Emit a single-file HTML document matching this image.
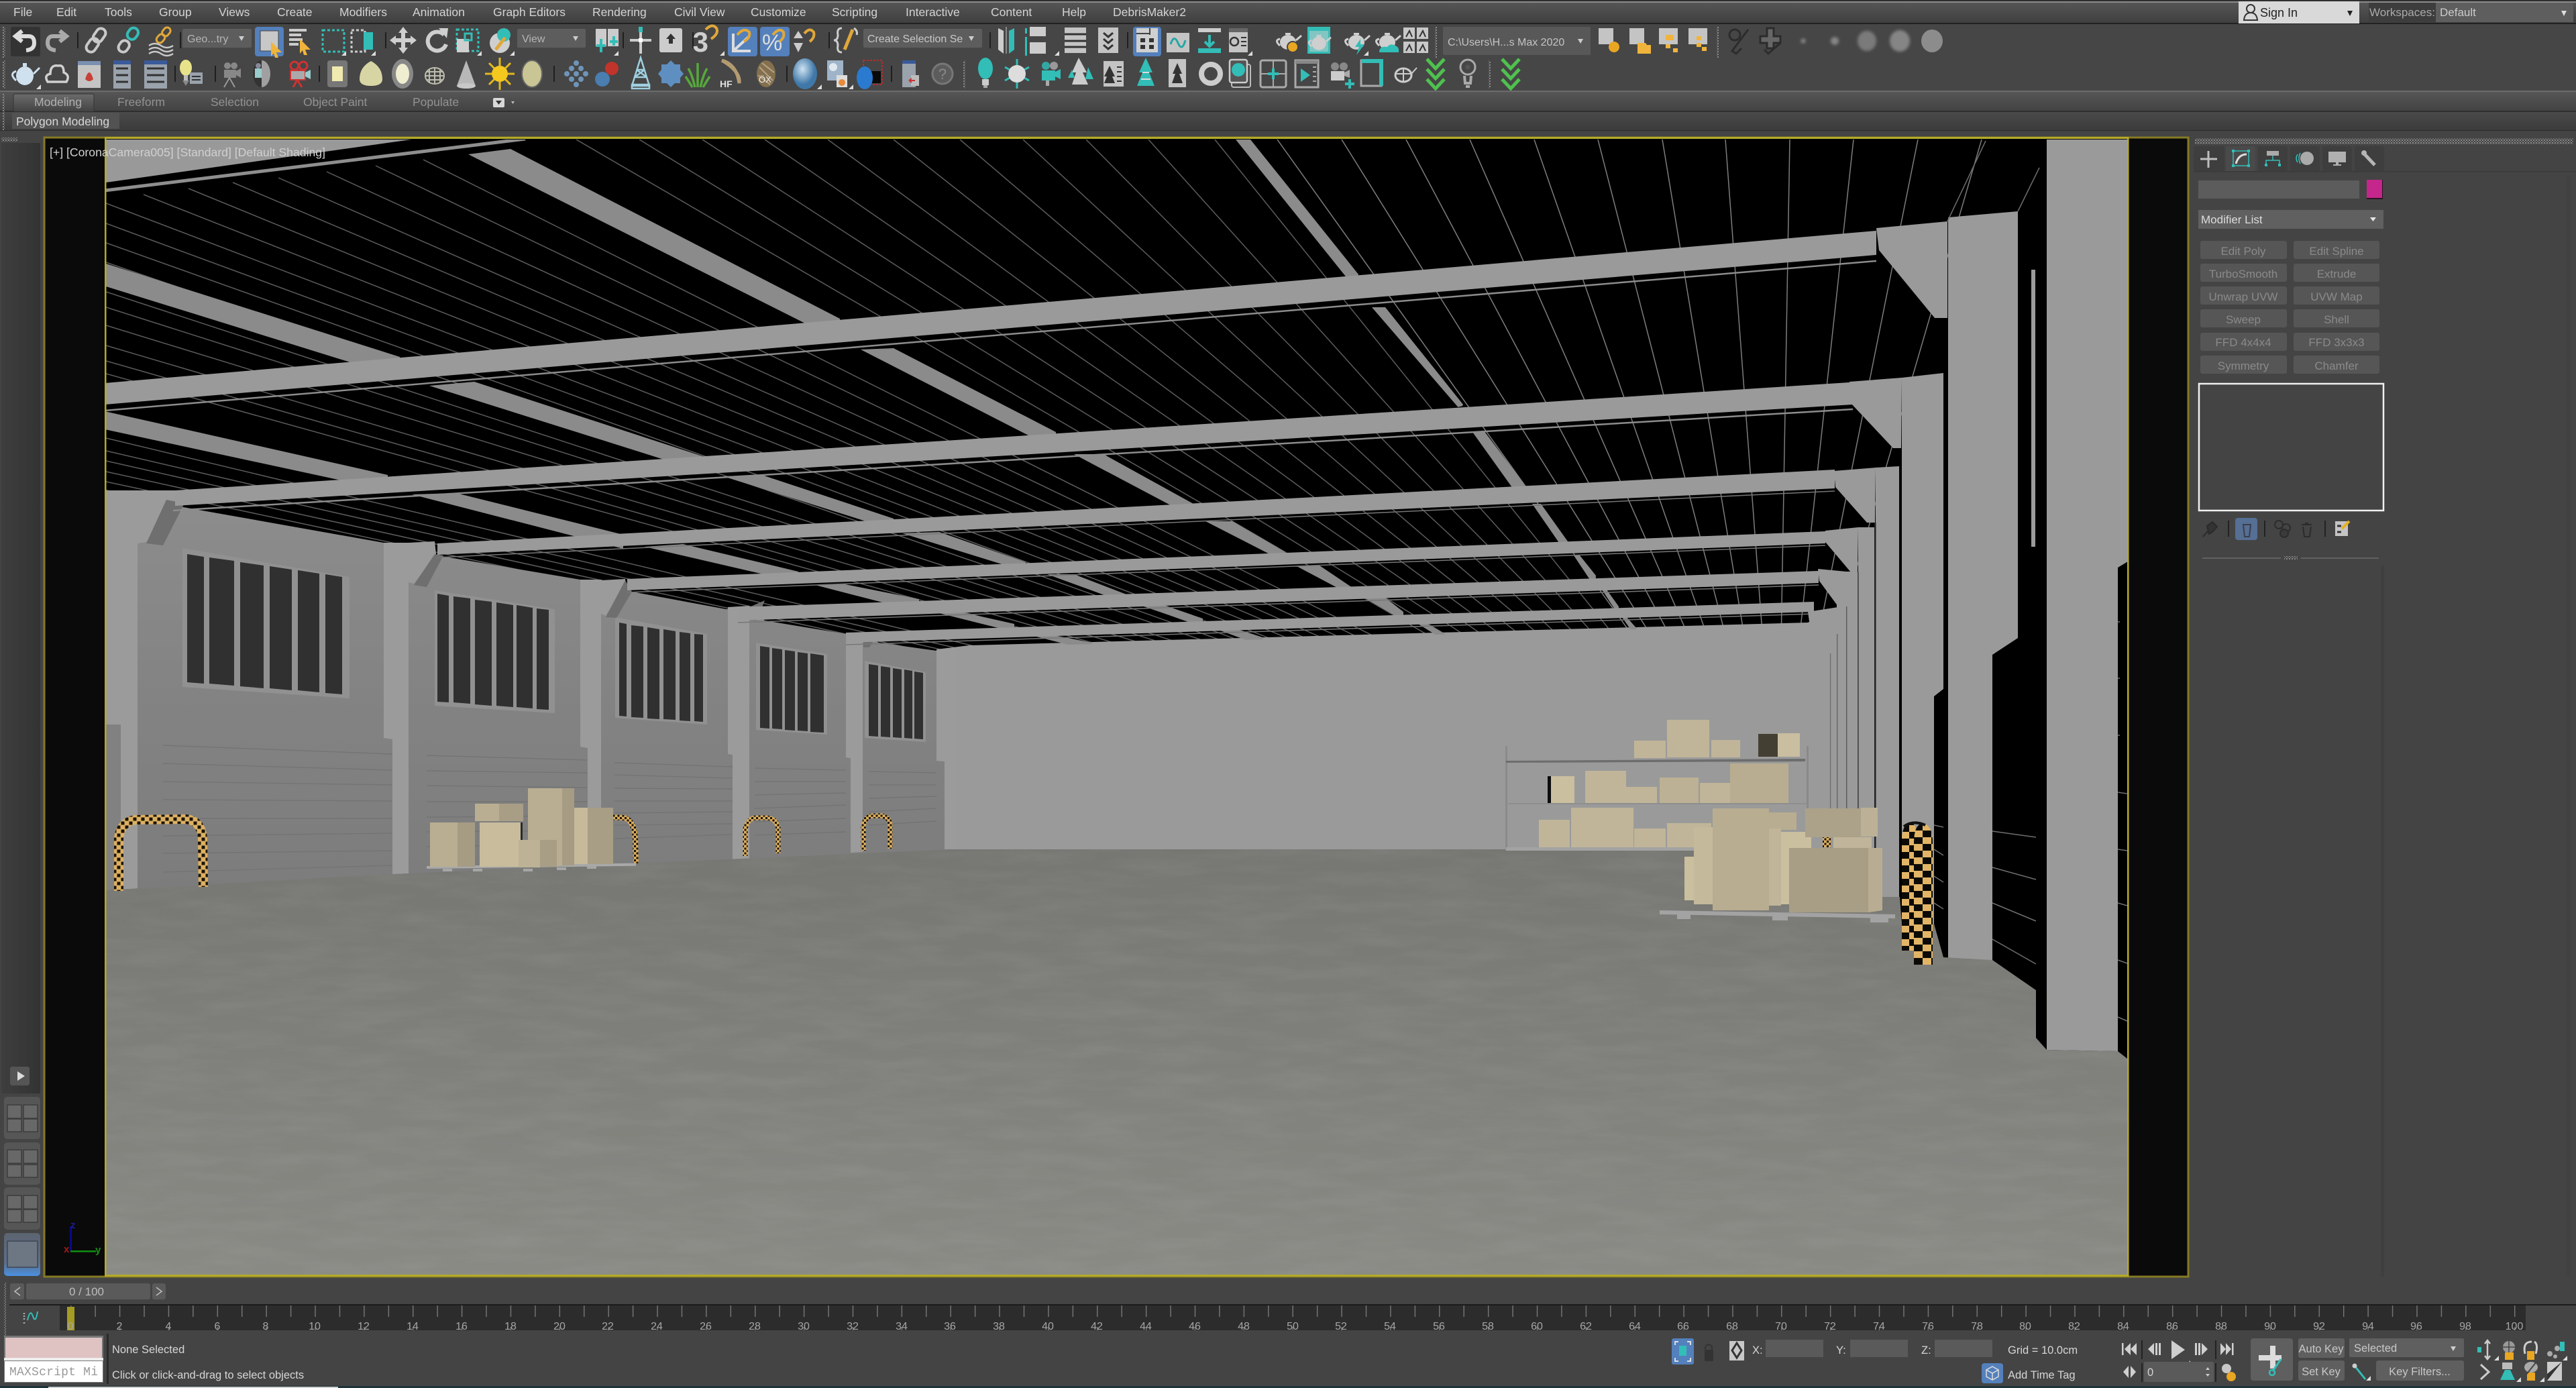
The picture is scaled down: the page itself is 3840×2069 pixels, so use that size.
<!DOCTYPE html>
<html lang="en"><head><meta charset="utf-8"><title>3ds Max 2020</title>
<style>
html,body{margin:0;padding:0;background:#444;width:3840px;height:2069px;overflow:hidden}
svg{display:block}
text{font-family:"Liberation Sans",sans-serif}
.m text,.m{fill:#d4d4d4;font-size:17.5px}
.b{fill:#8a8a8a;font-size:17px;text-anchor:middle}
.t{fill:#a6a6a6;font-size:16px;text-anchor:middle}
.s{fill:#d6d6d6;font-size:16.5px}
.n{fill:none;stroke:#c9c9c9;stroke-width:4}
.q{fill:none;stroke:#33bdb7;stroke-width:4}
.d{fill:none;stroke:#c9c9c9;stroke-width:3;stroke-dasharray:4 3}
.e{fill:none;stroke:#33bdb7;stroke-width:3;stroke-dasharray:4 3}
</style></head><body>
<svg width="3840" height="2069" viewBox="0 0 3840 2069" xmlns="http://www.w3.org/2000/svg">
<defs>
<linearGradient id="gm" x1="0" y1="0" x2="0" y2="1"><stop offset="0" stop-color="#555"/><stop offset="1" stop-color="#3f3f3f"/></linearGradient>
<linearGradient id="gr" x1="0" y1="0" x2="0" y2="1"><stop offset="0" stop-color="#565656"/><stop offset="1" stop-color="#424242"/></linearGradient>
<linearGradient id="gp" x1="0" y1="0" x2="0" y2="1"><stop offset="0" stop-color="#4a4a4a"/><stop offset="1" stop-color="#3b3b3b"/></linearGradient>
<linearGradient id="gt" x1="0" y1="0" x2="0" y2="1"><stop offset="0" stop-color="#6c6c6c"/><stop offset="1" stop-color="#444"/></linearGradient>
<linearGradient id="gf" x1="0" y1="0" x2="0" y2="1"><stop offset="0" stop-color="#767672"/><stop offset=".5" stop-color="#7f7f7b"/><stop offset="1" stop-color="#8a8a85"/></linearGradient>
<linearGradient id="gw" x1="0" y1="0" x2="0" y2="1"><stop offset="0" stop-color="#8d8d8d"/><stop offset=".5" stop-color="#838383"/><stop offset="1" stop-color="#7c7c7c"/></linearGradient>
<linearGradient id="gl" x1="0" y1="0" x2="1" y2="0"><stop offset="0" stop-color="#3e3e3e"/><stop offset="1" stop-color="#333"/></linearGradient>
<linearGradient id="gb" x1="0" y1="0" x2="0" y2="1"><stop offset="0" stop-color="#5c6470"/><stop offset=".7" stop-color="#5d6f8a"/><stop offset="1" stop-color="#4a90e2"/></linearGradient>
<radialGradient id="gs" cx=".4" cy=".35"><stop offset="0" stop-color="#cfe2f2"/><stop offset="1" stop-color="#3f78a8"/></radialGradient>
<pattern id="ck" x="2853" y="1228" width="26" height="20" patternUnits="userSpaceOnUse"><rect width="26" height="20" fill="#e2b566"/><rect width="13" height="10" fill="#0c0a06"/><rect x="13" y="10" width="13" height="10" fill="#0c0a06"/></pattern>
<pattern id="ck3" x="2835" y="1230" width="22" height="20" patternUnits="userSpaceOnUse"><rect width="22" height="20" fill="#e2b566"/><rect width="11" height="10" fill="#0c0a06"/><rect x="11" y="10" width="11" height="10" fill="#0c0a06"/></pattern>
<pattern id="ck2" width="12" height="12" patternUnits="userSpaceOnUse"><rect width="12" height="12" fill="#dcb063"/><rect x=".5" y=".5" width="5" height="5" fill="#1a1408"/><rect x="6.5" y="6.5" width="5" height="5" fill="#1a1408"/></pattern>
<pattern id="ck4" width="7" height="7" patternUnits="userSpaceOnUse"><rect width="7" height="7" fill="#d8ab5e"/><rect width="3" height="3" fill="#1a1408"/><rect x="3.5" y="3.5" width="3" height="3" fill="#1a1408"/></pattern>
<pattern id="tk" x="105" y="0" width="36.43" height="3000" patternUnits="userSpaceOnUse"><rect width="1.4" height="3000" fill="#777"/></pattern>
<pattern id="tk2" x="105" y="0" width="72.86" height="3000" patternUnits="userSpaceOnUse"><rect width="1.4" height="3000" fill="#777"/></pattern>
<pattern id="dt" width="4" height="4" patternUnits="userSpaceOnUse"><rect width="2" height="2" fill="#8a8a8a"/><rect x="2" y="2" width="2" height="2" fill="#6a6a6a"/></pattern>
<filter id="nz" x="0" y="0" width="1" height="1"><feTurbulence type="fractalNoise" baseFrequency=".01 .05" numOctaves="4" seed="7"/><feColorMatrix values="0 0 0 0 .6  0 0 0 0 .6  0 0 0 0 .58  1.6 0 0 0 -.55"/></filter>
<filter id="bl"><feGaussianBlur stdDeviation="2"/></filter>
<clipPath id="cv"><rect x="158" y="208" width="3014" height="1692"/></clipPath>
<clipPath id="cf"><polygon points="158,1327 585,1303 948,1287 1420,1266 2250,1266 2730,1266 2796,1337 2832,1337 2835,1377 2883,1377 2897,1427 2970,1431 3035,1476 3035,1547 3051,1565 3157,1567 3171,1578 3172,1900 158,1900"/></clipPath>
<polygon id="fl" points="0,0 7,0 7,-7" fill="#ddd"/>
<g id="chev"><path d="M-13 -22 L0 -8 L13 -22 M-13 -7 L0 7 L13 -7 M-13 8 L0 22 L13 8" fill="none" stroke="#4fc14f" stroke-width="5"/></g>
<g id="pot"><ellipse cy="3" rx="12" ry="11" fill="#cfcfcf"/><path d="M12 0 L20 -7 M-12 -2 Q-21 0 -12 8" fill="none" stroke="#cfcfcf" stroke-width="3"/><rect x="-4" y="-11" width="8" height="3" fill="#cfcfcf"/></g>
<g id="doc"><rect x="-14" y="-18" width="28" height="36" fill="#c4c4c4"/><rect x="-14" y="-18" width="28" height="6" fill="#666"/></g>
</defs>

<rect width="3840" height="2069" fill="#444"/>
<!-- menu -->
<rect y="0" width="3840" height="2" fill="#2f2f2f"/><rect y="2" width="3840" height="2" fill="#8c8c8c"/>
<rect y="4" width="3840" height="31" fill="url(#gm)"/><rect y="34" width="3840" height="2" fill="#222"/>
<rect y="36" width="3840" height="99" fill="#464646"/>
<g class="m">
<text x="20" y="24">File</text><text x="84" y="24">Edit</text><text x="156" y="24">Tools</text><text x="237" y="24">Group</text><text x="326" y="24">Views</text><text x="413" y="24">Create</text><text x="506" y="24">Modifiers</text><text x="615" y="24">Animation</text><text x="735" y="24">Graph Editors</text><text x="883" y="24">Rendering</text><text x="1005" y="24">Civil View</text><text x="1119" y="24">Customize</text><text x="1240" y="24">Scripting</text><text x="1350" y="24">Interactive</text><text x="1477" y="24">Content</text><text x="1583" y="24">Help</text><text x="1659" y="24">DebrisMaker2</text>
</g>
<rect x="3337" y="2" width="180" height="33" fill="#d9d9d9"/>
<circle cx="3355" cy="13" r="6" fill="none" stroke="#333" stroke-width="2"/><path d="M3345 30 Q3346 19 3355 19 Q3364 19 3365 30 Z" fill="none" stroke="#333" stroke-width="2"/>
<text x="3369" y="25" font-size="18" fill="#222" style="font-size:18px">Sign In</text><polygon points="3499,16 3507,16 3503,24" fill="#222"/>
<rect x="3531" y="4" width="100" height="29" fill="#3d3d3d"/><text x="3532" y="24" style="font-size:17px" fill="#aaa">Workspaces:</text>
<rect x="3631" y="4" width="205" height="29" fill="#5e5e5e"/><text x="3637" y="24" style="font-size:17px" fill="#ccc">Default</text><polygon points="3818,16 3826,16 3822,24" fill="#ddd"/>

<!-- toolbar strips -->
<rect x="4" y="40" width="4" height="46" fill="url(#dt)"/><rect x="4" y="90" width="4" height="42" fill="url(#dt)"/>
<g fill="#1f1f1f"><rect x="115" y="48" width="2" height="24"/><rect x="268" y="48" width="2" height="24"/><rect x="574" y="48" width="2" height="24"/><rect x="928" y="48" width="2" height="24"/><rect x="1032" y="48" width="2" height="24"/><rect x="1235" y="48" width="2" height="24"/><rect x="1475" y="48" width="2" height="24"/><rect x="1680" y="48" width="2" height="24"/><rect x="1835" y="48" width="2" height="24"/>
<rect x="260" y="98" width="2" height="24"/><rect x="320" y="98" width="2" height="24"/><rect x="475" y="98" width="2" height="24"/><rect x="825" y="98" width="2" height="24"/><rect x="1172" y="98" width="2" height="24"/><rect x="1328" y="98" width="2" height="24"/></g>
<rect x="1436" y="90" width="3" height="42" fill="url(#dt)"/><rect x="2139" y="40" width="3" height="46" fill="url(#dt)"/><rect x="2219" y="90" width="3" height="42" fill="url(#dt)"/><rect x="2559" y="40" width="3" height="46" fill="url(#dt)"/>

<!-- Row 1 icons -->
<rect x="16" y="40" width="44" height="44" rx="3" fill="#333"/>
<g transform="translate(37,60)"><path d="M-4 -14 L-14 -6 L-4 2 M-14 -6 H6 Q14 -6 14 4 Q14 14 2 15" fill="none" stroke="#ddd" stroke-width="6"/></g>
<g transform="translate(85,60) scale(-1,1)"><path d="M-4 -14 L-14 -6 L-4 2 M-14 -6 H6 Q14 -6 14 4 Q14 14 2 15" fill="none" stroke="#aaa" stroke-width="6"/></g>
<g transform="translate(143,60) rotate(-55)"><rect class="n" x="-20" y="-7" width="22" height="14" rx="7"/><rect class="n" x="-2" y="-7" width="22" height="14" rx="7"/></g>
<g transform="translate(191,60) rotate(-55)"><rect class="n" x="-20" y="-7" width="18" height="14" rx="7"/><rect class="q" x="3" y="-7" width="18" height="14" rx="7"/></g>
<g transform="translate(240,60)"><g transform="translate(4,-8) rotate(-50)"><rect x="-14" y="-5" width="14" height="10" rx="5" fill="none" stroke="#e0a83a" stroke-width="3"/><rect x="-1" y="-5" width="14" height="10" rx="5" fill="none" stroke="#e0a83a" stroke-width="3"/></g><path d="M-18 8 Q-9 2 0 8 T18 8 M-18 14 Q-9 8 0 14 T18 14 M-18 20 Q-9 14 0 20 T18 20" fill="none" stroke="#c9c9c9" stroke-width="2.5"/></g>
<rect x="272" y="43" width="103" height="28" rx="2" fill="#5d5d5d"/><text x="279" y="63" style="font-size:16px" fill="#b5b5b5">Geo...try</text><polygon points="356,54 364,54 360,61" fill="#ccc"/>
<rect x="380" y="40" width="43" height="44" rx="4" fill="#5480bc"/>
<rect x="388" y="46" width="27" height="30" fill="#c8c8c8" stroke="#444"/><polygon points="404,62 420,78 412,78 415,86 410,86 408,79 404,84" fill="#f0b43c"/>
<g transform="translate(447,60)"><path d="M-16 -15 H10 M-16 -8 H2 M-16 -1 H4 M-16 6 H-2" stroke="#ccc" stroke-width="4" fill="none"/><polygon points="0,-2 16,14 8,14 11,22 6,22 4,15 0,20" fill="#f0b43c"/></g>
<rect class="e" x="481" y="45" width="32" height="32" />
<g transform="translate(540,60)"><rect class="d" x="-16" y="-15" width="20" height="32"/><rect x="2" y="-12" width="14" height="26" fill="#33bdb7"/></g>
<g transform="translate(601,60)"><path d="M0 -20 L7 -11 H3 V-3 H11 V-7 L20 0 L11 7 V3 H3 V11 H7 L0 20 L-7 11 H-3 V3 H-11 V7 L-20 0 L-11 -7 V-3 H-3 V-11 H-7 Z" fill="#cfcfcf"/></g>
<g transform="translate(652,60)"><path d="M10 -8 A14 14 0 1 0 13 6" fill="none" stroke="#cfcfcf" stroke-width="6"/><polygon points="2,-18 16,-18 14,-3" fill="#cfcfcf"/></g>
<g transform="translate(697,60)"><rect class="e" x="-16" y="-16" width="32" height="32"/><rect x="-16" y="-2" width="18" height="20" fill="#cfcfcf"/><rect x="-4" y="-10" width="10" height="10" fill="none" stroke="#33bdb7" stroke-width="3"/></g>
<g transform="translate(745,60)"><circle cy="4" r="15" fill="#cfcfcf"/><circle cx="6" cy="-8" r="10" fill="#33bdb7"/><path d="M-6 14 L8 -4" stroke="#e0a83a" stroke-width="5"/></g>
<rect x="771" y="43" width="102" height="28" rx="2" fill="#5d5d5d"/><text x="778" y="63" style="font-size:16px" fill="#b5b5b5">View</text><polygon points="854,54 862,54 858,61" fill="#ccc"/>
<g transform="translate(905,60)"><rect x="-17" y="-17" width="34" height="26" fill="#ccc"/><rect x="-1" y="-17" width="2" height="26" fill="#444"/><path d="M-9 -2 V18 M-16 8 H-2 M10 -6 V8 M4 2 H16" stroke="#33bdb7" stroke-width="4"/></g>
<g transform="translate(955,60)"><path d="M0 -20 V20 M-16 0 H16" stroke="#ccc" stroke-width="4"/><rect x="-3" y="-20" width="6" height="8" fill="#33bdb7"/><rect x="-3" y="-3" width="6" height="6" fill="#fff"/></g>
<g transform="translate(1000,60)"><rect x="-17" y="-18" width="34" height="36" rx="3" fill="#ccc"/><path d="M0 -10 L7 -2 H3 V5 H-3 V-2 H-7 Z" fill="#333"/></g>
<text x="1044" y="77" style="font-size:42px;font-weight:bold" text-anchor="end" fill="#cfcfcf" dx="12">3</text><path d="M1060 48 Q1070 38 1076 46 Q1080 54 1068 62" fill="none" stroke="#e0a83a" stroke-width="4" transform="translate(-8,-4)"/>
<rect x="1085" y="40" width="44" height="44" rx="4" fill="#5480bc"/><rect x="1133" y="40" width="44" height="44" rx="4" fill="#5480bc"/>
<g transform="translate(1105,60)"><path d="M-12 -10 V16 H14 M-12 16 L12 -6" fill="none" stroke="#ddd" stroke-width="4"/><path d="M-6 -8 Q4 -20 12 -12 Q14 -4 4 2" fill="none" stroke="#e0a83a" stroke-width="4"/></g>
<g transform="translate(1154,60)"><text x="-18" y="15" style="font-size:34px" fill="#ddd">%</text><path d="M-2 -8 Q8 -20 14 -12 Q16 -4 8 2" fill="none" stroke="#e0a83a" stroke-width="4"/></g>
<g transform="translate(1197,60)"><polygon points="-14,-3 0,-3 -7,-14" fill="#ccc"/><polygon points="-14,4 0,4 -7,18" fill="#ccc"/><path d="M2 -10 Q10 -20 16 -12 Q18 -4 10 2" fill="none" stroke="#e0a83a" stroke-width="4"/></g>
<g transform="translate(1263,60)"><path d="M-8 -18 Q-16 -18 -14 -8 Q-14 0 -20 0 Q-14 0 -14 8 Q-16 18 -8 18 M10 -18 Q16 -14 14 -8" fill="none" stroke="#ccc" stroke-width="3"/><path d="M8 -16 L-4 14" stroke="#e0a83a" stroke-width="5"/></g>
<rect x="1287" y="43" width="177" height="28" rx="2" fill="#5d5d5d"/><text x="1293" y="63" style="font-size:16px" fill="#c8c8c8">Create Selection Se</text><polygon points="1444,54 1452,54 1448,61" fill="#ccc"/>
<g transform="translate(1500,60)"><rect x="-1" y="-20" width="2" height="40" fill="#888"/><polygon points="-4,-14 -12,-18 -12,14 -4,20" fill="#ccc"/><polygon points="4,-14 12,-18 12,14 4,20" fill="#33bdb7"/></g>
<g transform="translate(1545,60)"><rect x="-17" y="-5" width="3" height="28" fill="#33bdb7"/><rect x="-17" y="-18" width="3" height="8" fill="#33bdb7"/><rect x="-10" y="-20" width="24" height="14" fill="#ccc"/><rect x="-10" y="3" width="24" height="17" fill="#ccc"/></g>
<g transform="translate(1603,60)"><rect x="-16" y="-19" width="32" height="38" fill="#c4c4c4"/><path d="M-16 -9 H16 M-16 1 H16 M-16 10 H16" stroke="#333" stroke-width="3"/></g>
<g transform="translate(1652,60)"><rect x="-15" y="-19" width="30" height="38" fill="#c4c4c4"/><path d="M-7 -11 L0 -5 L7 -11 M-7 -2 L0 4 L7 -2 M-7 7 L0 13 L7 7" fill="none" stroke="#333" stroke-width="3"/></g>
<rect x="1689" y="40" width="42" height="44" rx="4" fill="#5480bc"/>
<g transform="translate(1710,60)"><rect x="-16" y="-18" width="32" height="36" fill="#d0d0d0"/><path d="M-16 -10 H4 M4 -18 V-8" stroke="#444" stroke-width="2" fill="none"/><rect x="-10" y="-3" width="7" height="6" fill="#333"/><rect x="3" y="-3" width="7" height="6" fill="#333"/><rect x="-10" y="7" width="7" height="6" fill="#333"/><rect x="3" y="7" width="7" height="6" fill="#333"/></g>
<g transform="translate(1756,60)"><rect x="-17" y="-18" width="34" height="36" fill="#c4c4c4"/><rect x="-17" y="-18" width="34" height="7" fill="#444"/><path d="M-11 6 Q-6 -10 0 4 T11 0" fill="none" stroke="#22a8a3" stroke-width="3"/></g>
<g transform="translate(1803,60)"><rect x="-17" y="-18" width="34" height="6" fill="#ccc"/><rect x="-17" y="12" width="34" height="7" fill="#33bdb7"/><path d="M0 -8 V8 M-7 2 L0 9 L7 2" fill="none" stroke="#33bdb7" stroke-width="4"/></g>
<g transform="translate(1846,60)"><use href="#doc"/><circle cx="-6" cy="2" r="6" fill="none" stroke="#333" stroke-width="2.5"/><path d="M4 -4 H12 M4 2 H12 M4 8 H12" stroke="#333" stroke-width="2"/></g>
<g transform="translate(1920,60)"><use href="#pot"/><circle cx="7" cy="10" r="8" fill="#e8a623" stroke="#444" stroke-width="2"/></g>
<g transform="translate(1966,60)"><rect x="-17" y="-20" width="34" height="40" fill="#33bdb7"/><rect x="-14" y="-14" width="28" height="31" fill="#d0d0d0" opacity=".5"/><use href="#pot" transform="translate(0,2) scale(.9)"/></g>
<g transform="translate(2022,60)"><use href="#pot"/><path d="M6 -2 L-2 10 H4 L0 22 L12 6 H6 Z" fill="#33bdb7"/></g>
<g transform="translate(2068,60)"><use href="#pot"/><path d="M-12 18 Q-12 8 0 10 Q4 4 12 8 Q18 10 17 18 Z" fill="#33bdb7"/></g>
<g transform="translate(2110,60)" fill="#c8c8c8"><rect x="-18" y="-19" width="17" height="17"/><rect x="2" y="-19" width="17" height="17"/><rect x="-18" y="2" width="17" height="17"/><rect x="2" y="2" width="17" height="17"/><path d="M-14 -5 L-9 -14 L-5 -5 M6 -5 L11 -14 L15 -5 M-14 16 L-9 7 L-5 16 M6 16 L11 7 L15 16" stroke="#333" stroke-width="2" fill="none"/></g>
<rect x="2151" y="40" width="220" height="42" rx="2" fill="#585858"/><text x="2158" y="68" style="font-size:16px" fill="#c4c4c4">C:\Users\H...s Max 2020</text><polygon points="2352,58 2360,58 2356,65" fill="#ccc"/>
<g transform="translate(2399,60)"><path d="M-16 -18 H6 V6 H-16 Z" fill="#c4c4c4"/><circle cx="7" cy="10" r="8" fill="#e8a623"/></g>
<g transform="translate(2445,60)"><path d="M-16 -18 H6 V6 H-16 Z" fill="#c4c4c4"/><path d="M-4 4 H8 L10 7 H16 V20 H-4 Z" fill="#f0b43c"/></g>
<g transform="translate(2487,60)"><path d="M-14 -18 H14 V6 H-14 Z" fill="#c4c4c4"/><rect x="-4" y="-8" width="12" height="8" fill="#f0b43c"/><rect x="-4" y="6" width="7" height="6" fill="#f0b43c"/><rect x="7" y="12" width="7" height="6" fill="#f0b43c"/></g>
<g transform="translate(2531,60)"><path d="M-14 -18 H14 V6 H-14 Z" fill="#c4c4c4"/><rect x="-2" y="-6" width="7" height="6" fill="#f0b43c"/><rect x="-2" y="4" width="7" height="6" fill="#f0b43c"/><rect x="6" y="10" width="7" height="6" fill="#f0b43c"/></g>
<g transform="translate(2590,60)" fill="none" stroke="#2c2c2c" stroke-width="3"><circle cx="-4" cy="-8" r="8"/><path d="M16 -16 L-8 16 L-2 20 L6 12"/></g>
<g transform="translate(2640,60)" fill="none" stroke="#2c2c2c" stroke-width="3"><path d="M-6 -18 H4 V-6 H14 V4 H4 V12 H-6 V4 H-16 V-6 H-6 Z" fill="#666"/><path d="M14 4 L-4 20 L-10 14"/></g>
<g filter="url(#bl)"><circle cx="2688" cy="61" r="3.5" fill="#8a8a8a"/><circle cx="2735" cy="61" r="6" fill="#858585"/><ellipse cx="2783" cy="61" rx="14" ry="15" fill="#7a7a7a"/><ellipse cx="2832" cy="61" rx="15" ry="16" fill="#858585"/></g><ellipse cx="2880" cy="61" rx="16" ry="17" fill="#8c8c8c"/>
<g transform="translate(0,0)"><use href="#fl" x="509" y="83"/><use href="#fl" x="553" y="83"/><use href="#fl" x="711" y="83"/><use href="#fl" x="760" y="83"/><use href="#fl" x="915" y="83"/><use href="#fl" x="1073" y="83"/><use href="#fl" x="1572" y="83"/><use href="#fl" x="1860" y="83"/><use href="#fl" x="2033" y="83"/></g>

<!-- Row 2 icons -->
<g transform="translate(37,110)"><ellipse cy="3" rx="13" ry="14" fill="#cfe0ee"/><path d="M13 0 L22 -9 M-13 -4 Q-24 0 -13 10" fill="none" stroke="#cfe0ee" stroke-width="3"/><rect x="-3" y="-16" width="6" height="5" fill="#cfe0ee"/></g>
<g transform="translate(85,110)"><path d="M-14 12 Q-20 2 -10 0 Q-10 -14 2 -12 Q10 -14 10 -2 Q20 2 14 12 Z" fill="none" stroke="#d0d0d0" stroke-width="3.5"/></g>
<g transform="translate(133,110)"><rect x="-17" y="-19" width="34" height="40" fill="#c4c4c4"/><rect x="-17" y="-19" width="34" height="6" fill="#7b8fb0"/><path d="M-6 8 Q0 -12 6 8 Q0 14 -6 8" fill="#c8403a"/></g>
<g transform="translate(182,110)"><rect x="-13" y="-20" width="26" height="42" fill="#9aa2ac"/><rect x="-13" y="-20" width="26" height="6" fill="#3a5a9a"/><path d="M-9 -8 H9 M-9 2 H9 M-9 12 H9" stroke="#333" stroke-width="3"/></g>
<g transform="translate(232,110)"><rect x="-17" y="-20" width="34" height="42" fill="#9aa2ac"/><rect x="-17" y="-20" width="34" height="6" fill="#3a5a9a"/><path d="M-13 -8 H13 M-13 2 H13 M-13 12 H13" stroke="#333" stroke-width="3"/></g>
<g transform="translate(283,110)"><ellipse cx="-6" cy="-9" rx="9" ry="12" fill="#e8e28a"/><rect x="-9" y="2" width="6" height="8" fill="#bbb"/><rect x="0" y="-2" width="19" height="17" fill="#9aa2ac"/><path d="M3 4 H16 M3 9 H16" stroke="#333" stroke-width="2"/><polygon points="-11,10 -1,10 -6,18" fill="#888"/></g>
<g transform="translate(344,110)" fill="#2e2e2e"><circle cx="-5" cy="-12" r="5" fill="#888"/><circle cx="5" cy="-12" r="5" fill="#888"/><rect x="-10" y="-6" width="18" height="12" fill="#888"/><polygon points="8,-4 15,-8 15,6 8,2" fill="#888"/><path d="M-2 6 L-10 20 M-2 6 L6 20" stroke="#999" stroke-width="2"/></g>
<g transform="translate(390,110)"><path d="M0 -20 A13 20 0 0 1 0 20 Z" fill="#a0a0a0"/><path d="M0 -20 A13 20 0 0 0 0 20 Z" fill="#333"/><rect x="-10" y="-8" width="10" height="14" fill="#9cc"/><circle cx="-5" cy="-12" r="4" fill="#889"/></g>
<g transform="translate(445,110)"><circle cx="-6" cy="-12" r="6" fill="none" stroke="#c33" stroke-width="3"/><circle cx="7" cy="-12" r="6" fill="none" stroke="#c33" stroke-width="3"/><rect x="-12" y="-5" width="22" height="14" fill="#aaa" stroke="#c33" stroke-width="2"/><polygon points="10,-2 18,-6 18,8 10,4" fill="#9cc"/><path d="M-2 9 L-8 20 M-2 9 L5 20" stroke="#c33" stroke-width="3"/></g>
<g transform="translate(503,110)"><rect x="-15" y="-20" width="30" height="40" rx="4" fill="#777"/><rect x="-8" y="-11" width="16" height="22" fill="#f0eab0"/></g>
<g transform="translate(553,110)"><path d="M0 -19 Q17 -10 17 8 Q17 18 0 18 Q-17 18 -17 8 Q-17 -10 0 -19" fill="#d8d5a5"/></g>
<g transform="translate(600,110)"><ellipse rx="16" ry="22" fill="#888"/><ellipse rx="10" ry="15" fill="#f0eed0"/></g>
<g transform="translate(648,110)" fill="none" stroke="#bdbdae" stroke-width="2"><ellipse cy="3" rx="14" ry="12"/><path d="M-14 3 H14 M-8 -7 V14 M0 -9 V15 M8 -7 V14 M-12 -3 H12 M-12 9 H12"/></g>
<polygon points="695,90 709,128 681,128" fill="#b8b8b8"/><ellipse cx="695" cy="128" rx="14" ry="4" fill="#c8c8c8"/>
<g transform="translate(745,110)"><path d="M0 -24 V24 M-22 0 H22 M-16 -16 L16 16 M-16 16 L16 -16" stroke="#e2b81e" stroke-width="3"/><circle r="12" fill="#f4c81e"/></g>
<ellipse cx="793" cy="110" rx="15" ry="20" fill="#c9c594" stroke="#666" stroke-width="2"/>
<g transform="translate(860,110)" fill="#6f94b8"><circle cx="-15" cy="0" r="4"/><circle cx="-8" cy="-8" r="4"/><circle cx="-1" cy="-16" r="4"/><circle cx="-8" cy="8" r="4"/><circle cx="-1" cy="0" r="4"/><circle cx="6" cy="-8" r="4"/><circle cx="-1" cy="16" r="4"/><circle cx="6" cy="8" r="4"/><circle cx="13" cy="0" r="4"/></g>
<g transform="translate(905,110)"><circle cx="7" cy="-8" r="10" fill="#c0342c"/><circle cx="-7" cy="8" r="11" fill="#4a7db0"/></g>
<g transform="translate(955,110)" fill="none" stroke="#9fd0e0" stroke-width="2.5"><path d="M0 -24 L13 18 H-13 Z M-9 5 H9 M-6 -6 H6 M-9 5 L6 -6 M9 5 L-6 -6"/><rect x="-13" y="16" width="26" height="6"/></g>
<g transform="translate(1000,110)"><path d="M0 -20 L6 -14 L14 -14 L14 -6 L19 0 L14 6 L14 14 L6 14 L0 20 L-6 14 L-14 14 L-14 6 L-19 0 L-14 -6 L-14 -14 L-6 -14 Z" fill="#5e8fc0"/></g>
<g transform="translate(1040,110)" fill="none" stroke="#55a93a" stroke-width="3.5"><path d="M0 20 V-16 M-4 20 Q-8 2 -14 -8 M4 20 Q8 2 14 -8 M-8 20 Q-14 10 -18 4 M8 20 Q14 10 18 4"/></g>
<g transform="translate(1090,110)"><path d="M-14 -20 Q8 -14 12 14 Q14 -4 -14 -20" fill="#b49a70" stroke="#b49a70" stroke-width="5"/><text x="-17" y="20" style="font-size:14px;font-weight:bold" fill="#e0e0e0">HF</text></g>
<g transform="translate(1142,110)"><ellipse rx="14" ry="20" fill="#84704f"/><path d="M-10 -10 L10 10 M-12 2 L6 16 M-6 -16 L12 -2" stroke="#b5a484" stroke-width="2"/><text x="-11" y="13" style="font-size:13px" fill="#eee">ÖX</text></g>
<ellipse cx="1200" cy="110" rx="18" ry="23" fill="url(#gs)"/>
<g transform="translate(1245,110)"><rect x="-12" y="-20" width="24" height="30" fill="#9fb4c8"/><circle cx="-3" cy="-10" r="6" fill="#e0e8f0"/><rect x="2" y="2" width="16" height="18" fill="#ddd"/><circle cx="10" cy="13" r="5" fill="#e88a3a"/></g>
<g transform="translate(1295,110)"><rect x="-8" y="-20" width="28" height="36" fill="none" stroke="#b03030" stroke-width="2" stroke-dasharray="3 2"/><rect x="-2" y="-4" width="20" height="18" fill="#0a0a0a"/><ellipse cx="-6" cy="6" rx="12" ry="17" fill="#2a7ad0"/></g>
<g transform="translate(1356,110)"><rect x="-11" y="-20" width="20" height="40" fill="#9aa2ac"/><rect x="-11" y="-20" width="20" height="5" fill="#3a5a9a"/><rect x="2" y="2" width="12" height="16" fill="#bbb"/><path d="M-1 10 H8 M-1 10 L3 7 M-1 10 L3 13" stroke="#c33" stroke-width="2" fill="none"/></g>
<circle cx="1405" cy="110" r="15" fill="#5c5c5c" stroke="#777" stroke-width="3"/><text x="1405" y="118" text-anchor="middle" style="font-size:22px" fill="#8a8a8a">?</text>
<g transform="translate(1469,110)"><ellipse cy="-8" rx="11" ry="16" fill="#33bdb7"/><rect x="-5" y="8" width="10" height="9" fill="#ccc"/><rect x="-3" y="17" width="6" height="4" fill="#aaa"/></g>
<g transform="translate(1516,110)"><path d="M0 -22 V22 M-18 -10 L18 10 M-18 10 L18 -10" stroke="#33bdb7" stroke-width="3"/><circle r="13" fill="#ddd"/></g>
<g transform="translate(1565,110)"><circle cx="-6" cy="-12" r="6" fill="#33a8a3"/><circle cx="6" cy="-12" r="6" fill="#999"/><rect x="-12" y="-5" width="20" height="15" fill="#33bdb7"/><polygon points="8,-3 16,-7 16,8 8,4" fill="#33bdb7"/><rect x="-6" y="10" width="5" height="8" fill="#aaa"/></g>
<g transform="translate(1612,110)"><polygon points="-4,-24 8,-2 2,-2 10,16 -14,16 -8,-2 -14,-2" fill="#ccc"/><polygon points="-14,-6 -20,6 -10,6" fill="#33bdb7"/><polygon points="10,-10 18,8 6,8" fill="#33bdb7"/></g>
<g transform="translate(1660,110)"><rect x="-15" y="-19" width="30" height="38" fill="#c4c4c4"/><polygon points="-6,-12 2,4 -2,4 2,14 -14,14 -10,4 -14,4" fill="#333"/><path d="M5 -10 H12 M5 -3 H12 M5 4 H12 M5 11 H12" stroke="#333" stroke-width="2"/></g>
<g transform="translate(1708,110)"><polygon points="0,-24 10,-2 5,-2 13,18 -13,18 -5,-2 -10,-2" fill="#33bdb7"/><path d="M-7 8 H7 M-5 -2 H5" stroke="#ddd" stroke-width="2"/></g>
<g transform="translate(1755,110)"><rect x="-13" y="-22" width="26" height="42" fill="#c4c4c4"/><polygon points="0,-16 7,0 3,0 8,14 -8,14 -3,0 -7,0" fill="#333"/></g>
<g transform="translate(1805,110)"><circle r="14" fill="none" stroke="#ccc" stroke-width="8"/><circle r="4" fill="#444"/></g>
<g transform="translate(1848,110)"><rect x="-12" y="-14" width="28" height="34" rx="3" fill="none" stroke="#bbb" stroke-width="2"/><rect x="-15" y="-21" width="26" height="34" rx="3" fill="#555" stroke="#ccc" stroke-width="2.5"/><circle cx="-2" cy="-6" r="10" fill="#33bdb7"/></g>
<g transform="translate(1898,110)"><rect x="-19" y="-20" width="38" height="40" rx="3" fill="none" stroke="#aaa" stroke-width="3"/><path d="M0 -20 V20 M-19 0 H19" stroke="#aaa" stroke-width="2"/><path d="M-8 0 H8 M0 -8 V8" stroke="#33bdb7" stroke-width="4"/></g>
<g transform="translate(1948,110)"><rect x="-17" y="-20" width="34" height="40" fill="none" stroke="#aaa" stroke-width="3"/><rect x="-17" y="-20" width="34" height="5" fill="#888"/><polygon points="-9,-8 5,2 -9,12" fill="#33bdb7"/><path d="M9 -10 H14 M9 -3 H14 M9 4 H14 M9 11 H14" stroke="#aaa" stroke-width="2"/></g>
<g transform="translate(1998,110)"><circle cx="-8" cy="-11" r="6" fill="#888"/><circle cx="5" cy="-11" r="6" fill="#888"/><rect x="-14" y="-4" width="20" height="14" fill="#ccc"/><polygon points="6,-2 14,-6 14,6 6,3" fill="#aaa"/><path d="M7 15 H21 M14 8 V22" stroke="#33bdb7" stroke-width="4"/></g>
<g transform="translate(2045,110)"><rect x="-16" y="-20" width="30" height="38" fill="none" stroke="#aaa" stroke-width="3"/><rect x="-16" y="-22" width="33" height="6" fill="#33bdb7"/><rect x="11" y="-20" width="6" height="38" fill="#33bdb7"/></g>
<g transform="translate(2092,110)"><ellipse cy="2" rx="12" ry="10" fill="none" stroke="#ccc" stroke-width="3"/><path d="M-12 0 H12 M0 -8 V12 M12 0 L20 -9" stroke="#ccc" stroke-width="2"/></g>
<use href="#chev" x="2140" y="110"/>
<g transform="translate(2188,110)"><circle cy="-10" r="11" fill="none" stroke="#aaa" stroke-width="3"/><circle cy="-10" r="3.5" fill="#555"/><path d="M-5 3 L-4 14 H4 L5 3 M-3 19 H3" stroke="#aaa" stroke-width="4" fill="none"/></g>
<use href="#chev" x="2252" y="110"/>
<use href="#fl" x="54" y="133"/><use href="#fl" x="1218" y="133"/><use href="#fl" x="1265" y="133"/>

<!-- ribbon -->
<rect y="135" width="3840" height="2" fill="#6c6c6c"/>
<rect y="137" width="3840" height="29" fill="url(#gr)"/><rect y="165" width="3840" height="2" fill="#2e2e2e"/>
<rect y="167" width="3840" height="28" fill="url(#gp)"/><rect y="194" width="3840" height="1" fill="#2c2c2c"/>
<path d="M20 166 V142 Q20 140 23 140 H138 Q140 140 140 143 V166" fill="url(#gt)" stroke="#333"/>
<text x="51" y="158" style="font-size:17.5px" fill="#b0b0b0">Modeling</text><text x="175" y="158" style="font-size:17.5px" fill="#929292">Freeform</text><text x="314" y="158" style="font-size:17.5px" fill="#929292">Selection</text><text x="452" y="158" style="font-size:17.5px" fill="#929292">Object Paint</text><text x="615" y="158" style="font-size:17.5px" fill="#929292">Populate</text>
<rect x="735" y="146" width="17" height="14" rx="2" fill="#d8d8d8"/><polygon points="739,150 748,150 743.5,156" fill="#333"/><polygon points="762,151 767,151 764.5,155" fill="#bbb"/>
<rect x="18" y="168" width="160" height="24" fill="#525252"/><text x="24" y="187" style="font-size:17.5px" fill="#d8d8d8">Polygon Modeling</text>
<rect x="4" y="140" width="3" height="54" fill="url(#dt)"/>

<!-- left sidebar -->
<rect x="2" y="205" width="24" height="6" fill="url(#dt)"/>
<rect x="2" y="213" width="58" height="1417" fill="url(#gl)"/>
<rect x="15" y="1590" width="29" height="28" rx="3" fill="#555"/><polygon points="26,1597 37,1604 26,1611" fill="#ddd"/>
<g>
<rect x="6" y="1635" width="54" height="63" rx="5" fill="#565656"/><rect x="6" y="1703" width="54" height="63" rx="5" fill="#565656"/><rect x="6" y="1770" width="54" height="63" rx="5" fill="#565656"/><rect x="6" y="1838" width="54" height="64" rx="5" fill="url(#gb)"/>
<g fill="#686868" stroke="#3c3c3c" stroke-width="1.5"><rect x="11" y="1647" width="21" height="20"/><rect x="35" y="1647" width="21" height="20"/><rect x="11" y="1668" width="21" height="19"/><rect x="35" y="1668" width="21" height="19"/>
<rect x="11" y="1714" width="21" height="20"/><rect x="35" y="1714" width="21" height="20"/><rect x="11" y="1736" width="21" height="19"/><rect x="35" y="1736" width="21" height="19"/>
<rect x="11" y="1782" width="21" height="20"/><rect x="35" y="1782" width="21" height="20"/><rect x="11" y="1803" width="21" height="19"/><rect x="35" y="1803" width="21" height="19"/>
<rect x="11" y="1850" width="45" height="39" fill="#6d7683" stroke="#3c4654"/></g>
</g>

<!-- viewport -->
<rect x="66" y="205" width="3196" height="1698" fill="#0a0a0a" stroke="#857a24" stroke-width="3"/>
<g clip-path="url(#cv)">
<rect x="158" y="208" width="3014" height="1692" fill="#000"/>
<!-- fan lines -->
<path stroke="#5c5c5c" stroke-width="1.5" fill="none" d="M859 208L2650 1250M953 208L2650 1250M1047 208L2650 1250M1140 208L2650 1250M1234 208L2650 1250M1332 208L2650 1250M1431 208L2650 1250M1525 208L2650 1250M1619 208L2650 1250M1712 208L2650 1250M1811 208L2650 1250M560 247L2650 1250M631 238L2650 1250M487 256L2650 1250M415 265L2650 1250M347 272L2650 1250M281 281L2650 1250M214 290L2650 1250M158 303L2650 1250M158 333L2650 1250M158 362L2650 1250M158 391L2650 1250M158 435L2650 1250M158 458L2650 1250M158 485L2650 1250M158 515L2650 1250M158 538L2650 1250M158 557L2650 1250M158 653L2650 1250M158 672L2650 1250M158 687L2650 1250M158 703L2650 1250M158 718L2650 1250"/>
<path stroke="#7d7d7d" stroke-width="1.5" fill="none" d="M1904 208L2650 1250M2000 208L2650 1250M2096 208L2650 1250M2191 208L2650 1250M2287 208L2650 1250M2382 208L2650 1250M2478 208L2650 1250M2572 208L2650 1250M2668 208L2650 1250M2763 208L2650 1250M2859 208L2650 1250M2954 208L2650 1250"/>
<!-- top left grey -->
<polygon points="158,208 613,208 158,272" fill="#999"/>
<path d="M156,284 L783,207" stroke="#8e8e8e" stroke-width="5" fill="none"/>
<!-- back wall -->
<polygon points="1396,968 1445,962 2695,928 2740,905 2740,1290 1396,1290" fill="#9a9a9a"/>
<!-- left wall -->
<polygon points="158,730 262,754 572,809 609,809 652,828 865,864 896,864 942,882 1082,908 1117,905 1140,925 1261,945 1286,945 1310,958 1396,970 1425,975 1425,1300 158,1340" fill="url(#gw)"/>
<!-- window frames & panes -->
<g fill="#919191"><polygon points="272,817 521,860 521,1041 272,1024"/><polygon points="648,880 827,908 827,1063 648,1052"/><polygon points="917,920 1054,945 1054,1080 917,1070"/><polygon points="1127,958 1233,975 1233,1095 1127,1088"/><polygon points="1289,985 1380,1002 1380,1106 1289,1100"/></g>
<g fill="#303030">
<polygon points="279,826 304,830 304,1019 279,1017"/><polygon points="312,831 349,836 349,1022 312,1019"/><polygon points="358,838 393,843 393,1026 358,1023"/><polygon points="402,844 435,849 435,1029 402,1026"/><polygon points="444,850 476,855 476,1032 444,1029"/><polygon points="485,856 510,860 510,1035 485,1033"/>
<polygon points="652,885 669,888 669,1047 652,1046"/><polygon points="676,889 701,892 701,1049 676,1047"/><polygon points="708,894 733,897 733,1052 708,1050"/><polygon points="740,898 765,902 765,1054 740,1052"/><polygon points="770,902 794,906 794,1056 770,1054"/><polygon points="800,907 818,909 818,1058 800,1057"/>
<polygon points="923,928 934,930 934,1068 923,1067"/><polygon points="941,932 959,934 959,1070 941,1069"/><polygon points="965,935 983,938 983,1072 965,1071"/><polygon points="989,938 1007,941 1007,1073 989,1072"/><polygon points="1013,942 1029,944 1029,1075 1013,1074"/><polygon points="1035,945 1048,946 1048,1076 1035,1075"/>
<polygon points="1133,963 1147,965 1147,1086 1133,1085"/><polygon points="1151,966 1166,968 1166,1087 1151,1086"/><polygon points="1170,969 1185,971 1185,1089 1170,1088"/><polygon points="1189,972 1204,974 1204,1090 1189,1089"/><polygon points="1208,974 1228,977 1228,1092 1208,1091"/>
<polygon points="1295,990 1309,992 1309,1098 1295,1097"/><polygon points="1313,993 1327,995 1327,1099 1313,1098"/><polygon points="1331,996 1344,998 1344,1100 1331,1099"/><polygon points="1348,998 1360,1000 1360,1101 1348,1100"/><polygon points="1363,1001 1376,1003 1376,1102 1363,1101"/>
</g>
<!-- wall lines -->
<path stroke="#747474" stroke-width="1.4" fill="none" d="M243 1111L585 1124M243 1138L585 1148M243 1165L585 1170M243 1192L585 1194M243 1220L585 1220M243 1246L585 1242M243 1272L585 1268M243 1300L585 1290M636 1126L875 1133M636 1149L875 1152M636 1171L875 1174M636 1195L875 1195M636 1218L875 1216M636 1240L875 1238M636 1262L875 1258M916 1137L1092 1143M916 1155L1092 1160M916 1175L1092 1176M916 1194L1092 1194M916 1212L1092 1210M916 1230L1092 1228M916 1250L1092 1244M1125 1145L1261 1148M1125 1165L1261 1165M1125 1185L1261 1182M1125 1205L1261 1200M1125 1225L1261 1220M1125 1245L1261 1240M1295 1150L1396 1152M1295 1170L1396 1170M1295 1190L1396 1187M1295 1210L1396 1205M1295 1230L1396 1224"/>
<!-- pillars -->
<g fill="#9b9b9b">
<polygon points="158,731 264,731 264,756 218,808 205,810 205,1324 180,1327 180,1080 158,1080"/>
<polygon points="572,809 609,809 609,1302 585,1303 585,1102 572,1100"/><polygon points="609,809 648,807 650,826 617,870 609,868"/>
<polygon points="865,864 896,864 896,1292 876,1293 876,1115 865,1113"/><polygon points="896,865 932,863 932,870 903,918 896,915"/>
<polygon points="1085,905 1117,903 1117,1280 1092,1281 1092,1125 1085,1124"/>
<polygon points="1261,943 1286,943 1286,1270 1268,1271 1268,1130 1261,1129"/>
<polygon points="1396,968 1425,965 1425,1266 1408,1266 1408,1135 1396,1134"/>
</g>
<rect x="158" y="1080" width="22" height="250" fill="#818181"/>
<g fill="#6f6f6f"><polygon points="248,745 275,750 243,813 218,810"/><polygon points="648,826 661,828 636,875 617,872"/><polygon points="932,865 942,882 919,921 903,920"/><polygon points="1117,905 1140,895 1128,925 1118,925"/><polygon points="1287,950 1310,943 1296,965 1287,965"/></g>
<!-- longitudinal beams -->
<g fill="#8b8b8b">
<polygon points="158,393 596,532 596,563 158,427"/><polygon points="698,230 761,222 1252,475 1252,508"/><polygon points="1842,208 1864,208 2025,409 2022,432"/>
<polygon points="156,613 578,708 578,731 156,640"/><polygon points="640,575 707,569 1047,680 1047,703"/><polygon points="1283,521 1332,519 1574,644 1574,670"/><polygon points="2045,458 2065,458 2181,603 2177,611"/>
<polygon points="614,737 680,735 929,797 929,818"/><polygon points="1078,710 1136,708 1332,773 1332,790"/><polygon points="1601,677 1645,677 1779,751 1775,769"/><polygon points="2195,644 2212,642 2273,723 2268,746"/>
<polygon points="961,815 1018,811 1190,852 1190,868"/><polygon points="1345,795 1400,793 1529,838 1529,852"/><polygon points="1797,777 1837,777 1916,823 1916,838"/><polygon points="2284,751 2297,751 2337,807 2333,822"/>
<polygon points="1215,872 1255,870 1370,893 1370,912"/><polygon points="1561,856 1601,856 1679,886 1679,899"/><polygon points="1931,843 1967,843 2016,876 2016,888"/><polygon points="2346,828 2355,828 2379,858 2378,876"/>
<polygon points="1400,914 1436,913 1512,930 1512,942"/><polygon points="1699,902 1735,902 1793,922 1793,934"/><polygon points="2034,891 2065,891 2092,912 2092,925"/><polygon points="2388,879 2395,879 2413,904 2412,916"/>
<polygon points="1529,945 1561,945 1628,958 1628,970"/><polygon points="1811,937 1842,937 1882,950 1882,963"/><polygon points="2114,930 2128,930 2154,945 2154,955"/><polygon points="2418,920 2425,920 2440,937 2438,949"/>
</g>
<g fill="#000"><polygon points="1180,480 1252,508 1252,478 1262,510 1250,512"/><polygon points="1980,412 2022,432 2029,445 2010,445"/><polygon points="2168,608 2181,605 2184,634 2176,634"/><polygon points="2262,726 2273,725 2276,752 2268,752"/></g>
<!-- transverse beams -->
<g fill="#9a9a9a">
<polygon points="156,571 2797,344 2797,380 156,603"/><polygon points="261,731 2757,570 2762,603 261,754"/><polygon points="652,810 2735,700 2735,728 652,827"/><polygon points="935,863 2721,792 2721,810 935,880"/><polygon points="1100,905 2711,851 2711,869 1100,925"/><polygon points="1261,943 2704,897 2704,912 1261,958"/><polygon points="1445,965 2695,931 2695,945 1445,977"/>
</g>
<path fill="none" stroke="#8c8c8c" stroke-width="2.5" d="M156 612L2797 389M258 761L2762 610"/>
<path fill="none" stroke="#777" stroke-width="1.5" d="M652 831L2735 732M935 883L2721 813M1100 928L2711 872M1261 961L2704 915"/>
<!-- right columns -->
<g fill="#9a9a9a">
<polygon points="2695,912 2740,905 2740,975 2727,975 2700,948"/>
<polygon points="2728,962 2738,950 2738,1300 2728,1300"/><rect x="2738" y="900" width="14" height="410"/><rect x="2752" y="852" width="17" height="470"/><rect x="2770" y="786" width="24" height="540"/>
<polygon points="2796,697 2831,695 2831,1337 2796,1337"/>
<polygon points="2710,848 2752,852 2752,904 2740,904 2712,866"/><polygon points="2721,791 2770,786 2769,853 2759,853 2721,808"/>
<polygon points="2734,702 2796,697 2795,779 2783,779 2736,726"/>
<polygon points="2757,569 2835,563 2834,668 2822,668 2759,601"/>
<polygon points="2835,563 2897,556 2897,1027 2883,1038 2883,1380 2835,1380"/>
<polygon points="2797,340 2903,330 2903,474 2884,474 2801,373"/>
<polygon points="2904,324 3008,315 3008,951 2970,976 2970,1431 2904,1431"/>
<rect x="3028" y="402" width="6" height="413"/>
<polygon points="3051,208 3172,208 3172,837 3157,846 3157,1567 3051,1565"/>
</g>
<rect x="2794" y="779" width="2.5" height="560" fill="#222"/><rect x="2769" y="853" width="1.8" height="470" fill="#4a4a4a"/><rect x="2752" y="904" width="1.4" height="410" fill="#5a5a5a"/><rect x="2738" y="945" width="1.4" height="360" fill="#666"/><rect x="2728" y="974" width="1.2" height="300" fill="#6a6a6a"/>
<path fill="none" stroke="#6e6e6e" stroke-width="1.5" d="M2970 1239L3035 1248M2970 1293L3035 1311M2970 1346L3035 1373M2970 1400L3035 1437M2883 1230L2897 1233M2883 1266L2897 1275M2883 1306L2897 1315M2883 1346L2897 1355M3157 1181L3171 1183M3157 1266L3171 1268M3157 1346L3171 1350M3157 1431L3171 1436M3157 1516L3171 1522M3157 927L3160 927M3157 1011L3160 1011M3157 1096L3160 1096M3008 315L3040 250M2903 330L2960 210"/>
<!-- floor -->
<g clip-path="url(#cf)"><rect x="158" y="1260" width="3014" height="640" fill="url(#gf)"/><rect x="158" y="1260" width="3014" height="640" filter="url(#nz)" opacity=".1"/></g>
<!-- shelf -->
<g fill="#8a8a8a"><rect x="2244" y="1112" width="3" height="156"/><rect x="2693" y="1112" width="3" height="156"/></g>
<polygon points="2245,1134 2691,1131 2691,1135 2245,1137" fill="#6d6d6d"/><rect x="2245" y="1197" width="449" height="2" fill="#8e8e8e"/><rect x="2245" y="1263" width="449" height="5" fill="#a3a3a3"/>
<g fill="#c0b599">
<rect x="2436" y="1104" width="47" height="26"/><rect x="2485" y="1073" width="63" height="56"/><rect x="2551" y="1103" width="43" height="26"/><rect x="2650" y="1093" width="33" height="35" fill="#c9bea0"/>
<rect x="2312" y="1157" width="35" height="40" fill="#cabf9f"/><rect x="2363" y="1149" width="61" height="48"/><rect x="2424" y="1173" width="46" height="24"/><rect x="2474" y="1159" width="58" height="38" fill="#bcb194"/><rect x="2534" y="1167" width="45" height="30"/><rect x="2579" y="1138" width="87" height="59" fill="#b8ad90"/>
<rect x="2294" y="1222" width="46" height="41"/><rect x="2342" y="1204" width="93" height="59"/><rect x="2436" y="1235" width="47" height="28"/><rect x="2485" y="1227" width="66" height="36"/>
</g>
<rect x="2621" y="1094" width="29" height="34" fill="#443f33"/><rect x="2307" y="1157" width="5" height="40" fill="#0c0c0c"/>
<!-- front stack -->
<g>
<rect x="2511" y="1277" width="14" height="65" fill="#cabf9f"/><rect x="2525" y="1233" width="28" height="115" fill="#c4b99b"/>
<rect x="2637" y="1211" width="41" height="26" fill="#b8ad90"/><rect x="2655" y="1240" width="45" height="25" fill="#cabf9f"/><rect x="2637" y="1235" width="18" height="115" fill="#c0b599"/><rect x="2655" y="1263" width="12" height="85" fill="#cabf9f"/>
<rect x="2553" y="1205" width="84" height="152" fill="#b8ad90"/>
<rect x="2733" y="1248" width="57" height="16" fill="#c0b59a"/><rect x="2717" y="1248" width="12" height="15" fill="url(#ck4)"/>
<rect x="2691" y="1205" width="83" height="43" fill="#aca28a"/><rect x="2774" y="1204" width="25" height="43" fill="#bcb196"/>
<rect x="2667" y="1264" width="118" height="96" fill="#a89e86"/><polygon points="2785,1264 2806,1264 2806,1357 2785,1360" fill="#b8ad92"/>
<g fill="#a3a3a3"><polygon points="2474,1357 2825,1363 2825,1369 2474,1363"/><rect x="2500" y="1363" width="20" height="7"/><rect x="2642" y="1365" width="23" height="7"/><rect x="2788" y="1368" width="27" height="7"/></g>
</g>
<!-- right bollards -->
<path d="M2835 1417 V1255 Q2835 1227 2848 1227 Q2858 1227 2858 1255 V1417 Z" fill="url(#ck3)"/>
<path d="M2853 1438 V1258 Q2853 1228 2866 1228 Q2881 1228 2881 1258 V1438 Z" fill="url(#ck)"/>
<path d="M2838 1232 Q2852 1222 2870 1230" stroke="#111" stroke-width="4" fill="none"/>
<!-- left bollards -->
<path d="M177 1328 L177 1250 Q180 1224 203 1222 L277 1221 Q300 1223 302 1250 L303 1322" fill="none" stroke="url(#ck2)" stroke-width="14"/>
<path d="M1111 1276 L1111 1235 Q1115 1220 1126 1219 L1144 1219 Q1158 1221 1160 1235 L1160 1272" fill="none" stroke="url(#ck4)" stroke-width="7"/>
<path d="M1287 1268 L1287 1230 Q1290 1217 1301 1216 L1314 1216 Q1326 1218 1327 1230 L1327 1265" fill="none" stroke="url(#ck4)" stroke-width="7"/>
<path d="M908 1218 L930 1219 Q945 1222 947 1250 L948 1287" fill="none" stroke="url(#ck4)" stroke-width="8"/>
<!-- left boxes -->
<rect x="636" y="1291" width="312" height="4" fill="#a9a9a9" transform="rotate(-.8 636 1291)"/>
<g fill="#a6a6a6"><rect x="660" y="1295" width="14" height="4"/><rect x="705" y="1295" width="14" height="4"/><rect x="780" y="1295" width="14" height="4"/><rect x="830" y="1293" width="14" height="4"/><rect x="875" y="1291" width="14" height="4"/></g>
<rect x="641" y="1226" width="41" height="66" fill="#b9ae92"/><rect x="682" y="1226" width="26" height="66" fill="#a69c84"/>
<rect x="708" y="1198" width="36" height="26" fill="#b9ae92"/><rect x="744" y="1198" width="36" height="26" fill="#a89e86"/>
<rect x="787" y="1175" width="51" height="115" fill="#b9ae92"/><rect x="838" y="1175" width="18" height="115" fill="#a69c84"/>
<rect x="715" y="1226" width="61" height="66" fill="#c8bc9c"/><rect x="776" y="1226" width="3" height="26" fill="#2a2a2a"/>
<rect x="773" y="1252" width="32" height="41" fill="#bdb296"/><rect x="805" y="1252" width="25" height="40" fill="#a89e86"/>
<rect x="856" y="1204" width="20" height="84" fill="#c6ba9a"/><rect x="876" y="1204" width="38" height="84" fill="#a89e86"/>
</g>
<!-- bright yellow on image -->
<g fill="#b5aa2a"><rect x="158" y="204" width="3014" height="3"/><rect x="158" y="1900" width="3014" height="3"/><rect x="156" y="204" width="2.5" height="1699"/><rect x="3171" y="204" width="2.5" height="1699"/></g>
<text x="74" y="233" style="font-size:17.5px" fill="#d0d0d0" textLength="411" lengthAdjust="spacingAndGlyphs">[+] [CoronaCamera005] [Standard] [Default Shading]</text>
<!-- gizmo -->
<rect x="104" y="1828" width="3" height="37" fill="#0a0a86"/><rect x="105" y="1864" width="38" height="2.5" fill="#109010"/>
<text x="105" y="1831" style="font-size:15px;font-weight:bold" fill="#1c1c90">z</text><text x="95" y="1867" style="font-size:15px;font-weight:bold" fill="#a81818">x</text><text x="142" y="1868" style="font-size:15px;font-weight:bold" fill="#159015">y</text>

<!-- right panel -->
<rect x="3272" y="206" width="564" height="9" fill="url(#dt)"/>
<g fill="#3e3e3e"><rect x="3270" y="218" width="46" height="38" rx="3"/><rect x="3318" y="218" width="44" height="38" rx="3" fill="#4a4a4a"/><rect x="3366" y="218" width="44" height="38" rx="3"/><rect x="3414" y="218" width="44" height="38" rx="3"/><rect x="3462" y="218" width="44" height="38" rx="3"/><rect x="3510" y="218" width="44" height="38" rx="3"/></g>
<rect x="3270" y="255" width="570" height="1.5" fill="#3a3a3a"/>
<path d="M3292 225 V250 M3280 237 H3305" stroke="#bdbdbd" stroke-width="3"/>
<g transform="translate(3340,236)"><rect class="e" x="-11" y="-11" width="23" height="22" style="stroke-width:1.5;stroke-dasharray:none"/><g fill="#33bdb7"><rect x="-13" y="-13" width="4" height="4"/><rect x="10" y="-13" width="4" height="4"/><rect x="-13" y="9" width="4" height="4"/><rect x="10" y="9" width="4" height="4"/></g><path d="M-7 8 Q-3 -6 9 -6" stroke="#ddd" stroke-width="3" fill="none"/></g>
<g transform="translate(3388,236)"><rect x="-9" y="-11" width="18" height="7" fill="#aaa"/><path d="M0 -4 V3 M-10 8 V3 H10 V8" stroke="#33bdb7" stroke-width="1.5" fill="none"/><rect x="-12" y="8" width="4" height="4" fill="#33bdb7"/><rect x="8" y="8" width="4" height="4" fill="#33bdb7"/></g>
<g transform="translate(3436,236)"><ellipse cx="3" rx="10" ry="10" fill="#aaa"/><path d="M-7 -8 Q-11 0 -7 8 M-11 -6 Q-15 0 -11 6" stroke="#33bdb7" stroke-width="1.5" fill="none"/></g>
<g transform="translate(3484,236)" fill="#b0b0b0"><rect x="-13" y="-10" width="26" height="16"/><rect x="-2" y="6" width="4" height="3"/><rect x="-6" y="9" width="12" height="2"/></g>
<path d="M3523 228 L3540 246" stroke="#b5b5b5" stroke-width="5"/><circle cx="3524" cy="228" r="4" fill="#b5b5b5"/>
<rect x="3277" y="269" width="240" height="27" fill="#5c5c5c"/><rect x="3528" y="268" width="24" height="29" fill="#2a1424"/><rect x="3528" y="268" width="23" height="27" fill="#c5268b"/>
<rect x="3277" y="313" width="276" height="28" fill="#606060"/><text x="3281" y="333" style="font-size:17px" fill="#dcdcdc">Modifier List</text><polygon points="3533,324 3542,324 3537.5,330" fill="#e5e5e5"/>
<g fill="#565656">
<rect x="3280" y="359" width="129" height="27" rx="3"/><rect x="3419" y="359" width="128" height="27" rx="3"/>
<rect x="3280" y="393" width="129" height="27" rx="3"/><rect x="3419" y="393" width="128" height="27" rx="3"/>
<rect x="3280" y="427" width="129" height="27" rx="3"/><rect x="3419" y="427" width="128" height="27" rx="3"/>
<rect x="3280" y="461" width="129" height="27" rx="3"/><rect x="3419" y="461" width="128" height="27" rx="3"/>
<rect x="3280" y="496" width="129" height="27" rx="3"/><rect x="3419" y="496" width="128" height="27" rx="3"/>
<rect x="3280" y="530" width="129" height="27" rx="3"/><rect x="3419" y="530" width="128" height="27" rx="3"/>
</g>
<g class="b">
<text x="3344" y="380">Edit Poly</text><text x="3483" y="380">Edit Spline</text>
<text x="3344" y="414">TurboSmooth</text><text x="3483" y="414">Extrude</text>
<text x="3344" y="448">Unwrap UVW</text><text x="3483" y="448">UVW Map</text>
<text x="3344" y="482">Sweep</text><text x="3483" y="482">Shell</text>
<text x="3344" y="516">FFD 4x4x4</text><text x="3483" y="516">FFD 3x3x3</text>
<text x="3344" y="551">Symmetry</text><text x="3483" y="551">Chamfer</text>
</g>
<rect x="3278" y="572" width="275" height="189" fill="#444" stroke="#f0f0f0" stroke-width="2.5"/>
<g transform="translate(3294,788)"><path d="M-10 12 L-2 3 M-4 -4 L4 -10 L11 -3 L5 4 L-1 8 Z" fill="#333" stroke="#2a2a2a" stroke-width="2"/></g>
<rect x="3321" y="776" width="2" height="24" fill="#222"/><rect x="3332" y="772" width="33" height="33" rx="4" fill="#566f94"/><path d="M3344 782 H3355 L3353 800 H3346 Z" fill="none" stroke="#3a3f4a" stroke-width="2"/>
<rect x="3375" y="776" width="2" height="24" fill="#222"/><g fill="none" stroke="#2c2c2c" stroke-width="2"><circle cx="3397" cy="782" r="6"/><circle cx="3408" cy="787" r="6"/><circle cx="3405" cy="795" r="6" fill="#3a3a3a"/><path d="M3431 782 H3446 M3433 785 L3435 800 H3443 L3445 785 M3436 780 H3441"/></g>
<rect x="3465" y="776" width="2" height="24" fill="#222"/><rect x="3481" y="777" width="19" height="22" fill="#c4c4c4"/><path d="M3484 784 H3490 M3484 793 H3490" stroke="#333" stroke-width="3"/><path d="M3491 788 L3502 777" stroke="#e8b020" stroke-width="4"/>
<path d="M3283 832 H3400 M3430 832 H3546" stroke="#6b6b6b" stroke-width="1.5"/><rect x="3405" y="829" width="20" height="5" fill="url(#dt)"/>
<rect x="3549" y="843" width="5" height="1060" fill="#3f3f3f"/><rect x="3826" y="263" width="6" height="1640" fill="#414141"/>

<!-- time slider -->
<rect x="6" y="1912" width="3" height="80" fill="url(#dt)"/>
<rect x="15" y="1913" width="21" height="24" rx="3" fill="#5a5a5a"/><path d="M30 1919 L22 1925 L30 1931" stroke="#bbb" stroke-width="1.6" fill="none"/>
<rect x="39" y="1913" width="185" height="24" rx="3" fill="#5a5a5a"/><text x="129" y="1931" text-anchor="middle" style="font-size:17px" fill="#bdbdbd">0 / 100</text>
<rect x="227" y="1913" width="20" height="24" rx="3" fill="#5a5a5a"/><path d="M233 1919 L241 1925 L233 1931" stroke="#bbb" stroke-width="1.6" fill="none"/>
<rect x="14" y="1944" width="3826" height="2" fill="#1c1c1c"/>
<rect x="89" y="1946" width="3676" height="37" fill="#2c2c2c"/>
<rect x="89" y="1946" width="3676" height="17" fill="url(#tk)"/><rect x="89" y="1978" width="3676" height="5" fill="url(#tk2)"/>
<rect x="100" y="1948" width="11" height="35" fill="#a49c24"/>
<path d="M36 1957 V1967 M36 1971 V1973" stroke="#aaa" stroke-width="2.5" stroke-dasharray="2 2"/><path d="M41 1968 Q45 1950 49 1962 T56 1955" stroke="#33bdb7" stroke-width="2" fill="none"/>
<g class="t">
<text x="105" y="1982">0</text><text x="178" y="1982">2</text><text x="251" y="1982">4</text><text x="324" y="1982">6</text><text x="396" y="1982">8</text><text x="469" y="1982">10</text><text x="542" y="1982">12</text><text x="615" y="1982">14</text><text x="688" y="1982">16</text><text x="761" y="1982">18</text><text x="834" y="1982">20</text><text x="906" y="1982">22</text><text x="979" y="1982">24</text><text x="1052" y="1982">26</text><text x="1125" y="1982">28</text><text x="1198" y="1982">30</text><text x="1271" y="1982">32</text><text x="1344" y="1982">34</text><text x="1416" y="1982">36</text><text x="1489" y="1982">38</text><text x="1562" y="1982">40</text><text x="1635" y="1982">42</text><text x="1708" y="1982">44</text><text x="1781" y="1982">46</text><text x="1854" y="1982">48</text><text x="1927" y="1982">50</text><text x="1999" y="1982">52</text><text x="2072" y="1982">54</text><text x="2145" y="1982">56</text><text x="2218" y="1982">58</text><text x="2291" y="1982">60</text><text x="2364" y="1982">62</text><text x="2437" y="1982">64</text><text x="2509" y="1982">66</text><text x="2582" y="1982">68</text><text x="2655" y="1982">70</text><text x="2728" y="1982">72</text><text x="2801" y="1982">74</text><text x="2874" y="1982">76</text><text x="2947" y="1982">78</text><text x="3019" y="1982">80</text><text x="3092" y="1982">82</text><text x="3165" y="1982">84</text><text x="3238" y="1982">86</text><text x="3311" y="1982">88</text><text x="3384" y="1982">90</text><text x="3457" y="1982">92</text><text x="3530" y="1982">94</text><text x="3602" y="1982">96</text><text x="3675" y="1982">98</text><text x="3748" y="1982">100</text>
</g>

<!-- status bar left -->
<rect x="6" y="1991" width="148" height="70" fill="#777"/>
<rect x="8" y="1994" width="144" height="30" fill="#dfc2c2"/><rect x="6" y="2024" width="148" height="4" fill="#eee"/>
<rect x="7" y="2029" width="146" height="31" fill="#fff"/>
<text x="14" y="2050" style="font-family:'Liberation Mono',monospace;font-size:18px" fill="#999" textLength="132">MAXScript Mi</text>
<rect x="159" y="1988" width="3" height="75" fill="#2a2a2a"/>
<text x="167" y="2017" class="s">None Selected</text>
<text x="167" y="2055" class="s">Click or click-and-drag to select objects</text>
<rect y="2066" width="3840" height="3" fill="#20323a"/><rect x="72" y="2067" width="432" height="2" fill="#cfcfcf"/>

<!-- status bar right -->
<rect x="2492" y="1995" width="33" height="39" rx="3" fill="#5480bc"/><rect x="2503" y="2006" width="11" height="15" fill="#33bdb7"/><path d="M2497 2005 V2000 H2502 M2520 2005 V2000 H2515 M2497 2024 V2029 H2502 M2520 2024 V2029 H2515" stroke="#ddd" stroke-width="2" fill="none"/>
<path d="M2542 2012 V2008 Q2547 2000 2552 2008 V2012" fill="none" stroke="#333" stroke-width="2"/><rect x="2541" y="2012" width="13" height="17" rx="2" fill="#333"/>
<rect x="2578" y="1999" width="22" height="29" fill="#c8c8c8"/><path d="M2589 2002 L2596 2013 L2589 2024 L2582 2013 Z" fill="none" stroke="#333" stroke-width="3"/>
<text x="2612" y="2018" class="s">X:</text><rect x="2632" y="1997" width="86" height="26" fill="#5a5a5a"/>
<text x="2737" y="2018" class="s">Y:</text><rect x="2758" y="1997" width="86" height="26" fill="#5a5a5a"/>
<text x="2864" y="2018" class="s">Z:</text><rect x="2884" y="1997" width="86" height="26" fill="#5a5a5a"/>
<text x="2993" y="2018" class="s">Grid = 10.0cm</text>
<rect x="2954" y="2032" width="32" height="30" rx="4" fill="#5480bc"/><path d="M2970 2037 L2979 2042 V2052 L2970 2057 L2961 2052 V2042 Z M2961 2042 L2970 2047 L2979 2042 M2970 2047 V2057" fill="none" stroke="#ddd" stroke-width="1.5"/>
<text x="2993" y="2055" class="s">Add Time Tag</text>
<g fill="#cfcfcf">
<rect x="3163" y="2002" width="2.5" height="18"/><polygon points="3176,2002 3176,2020 3167,2011"/><polygon points="3185,2002 3185,2020 3176,2011"/>
<rect x="3192" y="1998" width="2" height="28" fill="#222"/>
<polygon points="3211,2002 3211,2020 3202,2011"/><rect x="3213" y="2002" width="3" height="18"/><rect x="3218" y="2002" width="3" height="18"/>
<polygon points="3237,1998 3237,2026 3257,2012"/><use href="#fl" x="3258" y="2035"/>
<rect x="3272" y="2002" width="3" height="18"/><rect x="3277" y="2002" width="3" height="18"/><polygon points="3282,2002 3282,2020 3291,2011"/>
<rect x="3302" y="1998" width="2" height="28" fill="#222"/>
<polygon points="3310,2002 3310,2020 3318,2011"/><polygon points="3318,2002 3318,2020 3326,2011"/><rect x="3327" y="2002" width="2.5" height="18"/>
<polygon points="3173,2036 3173,2054 3165,2045"/><polygon points="3176,2036 3176,2054 3184,2045"/>
</g>
<rect x="3192" y="2032" width="2" height="28" fill="#222"/>
<rect x="3196" y="2030" width="104" height="30" rx="2" fill="#5a5a5a"/><text x="3201" y="2051" class="s" fill="#bbb">0</text><path d="M3291 2038 L3294 2042 H3288 Z M3291 2052 L3294 2048 H3288 Z" fill="#ccc"/>
<rect x="3302" y="2032" width="2" height="28" fill="#222"/>
<circle cx="3319" cy="2040" r="7" fill="#c8c8c8"/><circle cx="3326" cy="2052" r="7" fill="#e8a623"/>
<rect x="3355" y="1995" width="63" height="63" rx="4" fill="#5f5f5f"/>
<path d="M3384 2006 H3392 V2020 H3401 V2028 H3392 V2040 H3384 V2028 H3367 V2020 H3384 Z" fill="#dcdcdc"/>
<path d="M3388 2044 L3400 2026" stroke="#33bdb7" stroke-width="3"/><circle cx="3387" cy="2046" r="4" fill="none" stroke="#33bdb7" stroke-width="2.5"/>
<rect x="3426" y="1995" width="69" height="29" rx="3" fill="#5f5f5f"/><text x="3460" y="2016" text-anchor="middle" style="font-size:16.5px" fill="#c8c8c8">Auto Key</text>
<rect x="3502" y="1995" width="171" height="28" rx="2" fill="#5f5f5f"/><text x="3509" y="2015" style="font-size:16.5px" fill="#c8c8c8">Selected</text><polygon points="3653,2007 3661,2007 3657,2014" fill="#ccc"/>
<rect x="3426" y="2028" width="69" height="30" rx="3" fill="#5f5f5f"/><text x="3460" y="2050" text-anchor="middle" style="font-size:16.5px" fill="#c8c8c8">Set Key</text>
<path d="M3510 2036 L3526 2056" stroke="#33bdb7" stroke-width="3"/><circle cx="3510" cy="2036" r="3.5" fill="#ccc"/><use href="#fl" x="3527" y="2058"/>
<rect x="3542" y="2028" width="131" height="30" rx="3" fill="#5f5f5f"/><text x="3607" y="2050" text-anchor="middle" style="font-size:16.5px" fill="#c8c8c8">Key Filters...</text>
<g transform="translate(3705,2012)"><rect x="-12" y="-4" width="6" height="8" fill="#33bdb7"/><path d="M3 -14 V14 M-1 -9 L3 -14 L7 -9 M-1 9 L3 14 L7 9" stroke="#ccc" stroke-width="2.5" fill="none"/></g>
<g transform="translate(3740,2012)"><circle cy="-4" r="9" fill="#999"/><path d="M0 -13 V5 M-9 -4 H9" stroke="#444" stroke-width="1.5"/><rect x="-6" y="4" width="13" height="11" fill="#e8a623"/></g>
<g transform="translate(3772,2012)"><path d="M-8 6 Q-12 -12 2 -12 M8 6 Q12 -8 6 -12" fill="none" stroke="#ccc" stroke-width="3"/><rect x="-5" y="2" width="11" height="13" fill="#e8a623"/></g>
<g transform="translate(3810,2012)"><circle cx="-9" cy="6" r="4" fill="#aaa"/><circle cx="2" cy="-2" r="4" fill="#aaa"/><rect x="6" y="-12" width="7" height="14" fill="#33bdb7"/><circle cx="-1" cy="10" r="3" fill="#aaa"/></g>
<use href="#fl" x="3718" y="2028"/><use href="#fl" x="3820" y="2028"/>
<path d="M3698 2034 L3710 2045 L3698 2056" fill="none" stroke="#ccc" stroke-width="3"/>
<g transform="translate(3738,2044)"><rect x="-8" y="-13" width="15" height="10" fill="#bbb"/><polygon points="-11,13 11,13 4,-2 -4,-2" fill="#33bdb7"/></g>
<g transform="translate(3773,2044)"><ellipse cy="-6" rx="10" ry="8" fill="#aaa"/><rect x="-6" y="2" width="12" height="12" fill="#e8a623"/><path d="M8 -14 L-8 6" stroke="#444" stroke-width="2"/></g>
<g transform="translate(3808,2044)"><rect x="-11" y="-14" width="22" height="28" fill="#ccc"/><polygon points="-11,14 11,-14 11,-14 -11,4" fill="#333"/></g>
<use href="#fl" x="3751" y="2060"/><use href="#fl" x="3786" y="2060"/>
</svg>
</body></html>
